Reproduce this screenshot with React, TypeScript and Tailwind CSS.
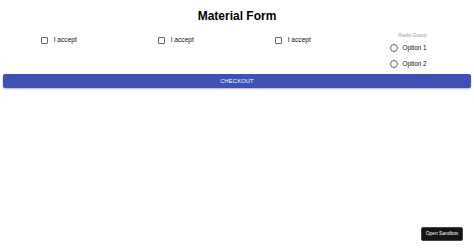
import React from 'react';

const font = { fontFamily: '"Liberation Sans", Arial, sans-serif' };

const Checkbox: React.FC<{ label: string }> = ({ label }) => (
  <label className="flex h-[16px] items-center justify-center gap-[5.5px] pr-[5px] text-[6.6px] text-[#111]">
    <span className="block h-[7px] w-[7px] rounded-[1px] border border-[#666]" />
    <span>{label}</span>
  </label>
);

const Radio: React.FC<{ label: string }> = ({ label }) => (
  <label className="flex h-[16px] items-center gap-[4px] text-[6.4px] text-[#111]">
    <span className="block h-[8px] w-[8px] rounded-full border border-[#666]" />
    <span>{label}</span>
  </label>
);

export default function App() {
  return (
    <div className="relative h-[248px] w-full bg-white px-[3px]" style={font}>
      <h1 className="pt-[9px] text-center text-[12px] leading-[15px] font-bold text-black">Material Form</h1>
      <div className="mt-[8px] grid grid-cols-4 items-start">
        <Checkbox label="I accept" />
        <Checkbox label="I accept" />
        <Checkbox label="I accept" />
        <div className="flex flex-col items-center">
          <div className="mb-[2px] text-[5px] leading-[6px] text-[#9a9a9a]">Radio Group</div>
          <div className="flex flex-col pr-[8px]">
            <Radio label="Option 1" />
            <Radio label="Option 2" />
          </div>
        </div>
      </div>
      <button className="mt-[2px] flex h-[14px] w-full items-center justify-center rounded-[2px] bg-[#3f51b5] text-[5.7px] tracking-[0.2px] text-white shadow-[0_1px_2px_rgba(0,0,0,0.3)]">
        CHECKOUT
      </button>
      <div className="fixed right-[11px] bottom-[7px] flex h-[14px] w-[42px] items-center justify-center rounded-[2px] border border-[#444] bg-[#151515] text-[4.9px] text-white">
        Open Sandbox
      </div>
    </div>
  );
}
